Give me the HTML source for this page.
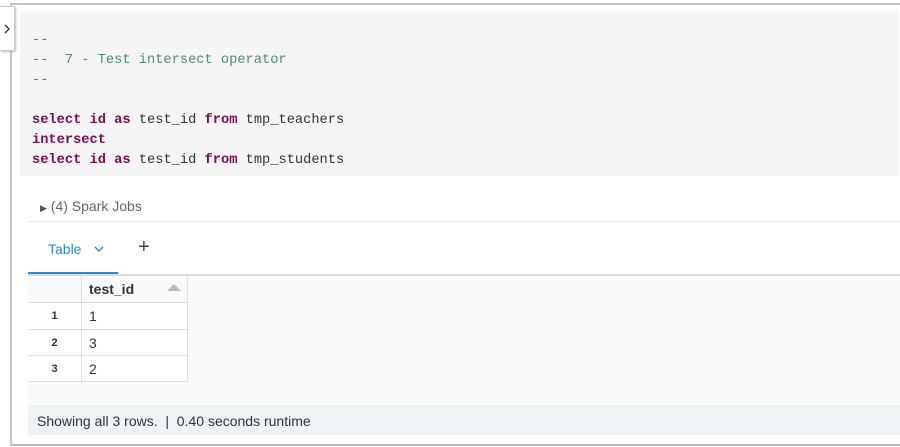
<!DOCTYPE html>
<html><head><style>
body{margin:0;width:900px;height:447px;background:#fff;position:relative;overflow:hidden;font-family:"Liberation Sans",sans-serif}
.outer{position:absolute;left:10px;top:3px;width:892px;height:439px;border-top:2px solid #c4c4c4;border-left:2px solid #c8c8c8;border-bottom:2px solid #bdbdbd}
.tog{position:absolute;left:0;top:6px;width:14px;height:43px;background:#fff;border:1px solid #c8c8c8;border-left:none;box-shadow:1px 1px 2px rgba(0,0,0,.25)}
.code{position:absolute;left:20px;top:11px;width:879px;height:165px;background:#f5f5f5}
pre{margin:0;position:absolute;left:12px;top:20px;font-family:"Liberation Mono",monospace;font-size:13.7px;line-height:20px;color:#333}
.c{color:#4f8a74}.k{color:#7a0d4f;font-weight:bold}
.jobs{position:absolute;left:40px;top:198px;font-size:14px;color:#666}
.box{position:absolute;left:28px;top:221px;width:872px;height:184px;border-top:1px solid #e6e6e6;background:#fff}
.tab{position:absolute;left:20px;top:19px;font-size:14px;color:#2a8ad4}
.und{position:absolute;left:0;top:50px;width:90px;height:2px;background:#2a8ad4}
.grid{position:absolute;left:0;top:52px;width:872px;height:128px;background:#fafafa;border-top:2px solid #dcdcdc}
.cell{position:absolute;box-sizing:border-box;border-right:1px solid #ddd;border-bottom:1px solid #ddd;font-size:14px;color:#333}
.n{font-size:11px;font-weight:bold;text-align:center;padding-top:7px;background:#fff}
.foot{position:absolute;left:28px;top:405px;width:872px;height:30px;background:#eef3f6;font-size:14px;color:#333;line-height:32px;padding-left:9px;box-sizing:border-box}
</style></head><body>
<div class="outer"></div>
<div class="tog"><svg width="14" height="43"><path d="M5 22 L9 26 L5 30" transform="translate(0,-4)" fill="none" stroke="#333" stroke-width="1.3"/></svg></div>
<div class="code"><pre><span class="c">--
--  7 - Test intersect operator
--</span>

<span class="k">select</span> <span class="k">id</span> <span class="k">as</span> test_id <span class="k">from</span> tmp_teachers
<span class="k">intersect</span>
<span class="k">select</span> <span class="k">id</span> <span class="k">as</span> test_id <span class="k">from</span> tmp_students</pre></div>
<div class="jobs"><span style="font-size:9px;color:#555">&#9654;</span> (4) Spark Jobs</div>
<div class="box">
<div class="tab">Table <svg width="12" height="10" style="margin-left:8px"><path d="M2 3 L6 7 L10 3" fill="none" stroke="#2a8ad4" stroke-width="1.4"/></svg></div>
<div style="position:absolute;left:110px;top:14px;font-size:20px;color:#444">+</div>
<div class="und"></div>
<div class="grid">
<div class="cell" style="left:0;top:0;width:54px;height:27px;"></div>
<div class="cell" style="left:54px;top:0;width:106px;height:27px;background:#fafafa;font-weight:bold;padding:5px 0 0 7px">test_id<span style="position:absolute;right:6px;top:8px;width:0;height:0;border-left:7px solid transparent;border-right:7px solid transparent;border-bottom:7px solid #bbb"></span></div>
<div class="cell n" style="left:0;top:27px;width:54px;height:27px;">1</div>
<div class="cell" style="left:54px;top:27px;width:106px;height:27px;background:#fff;padding:5px 0 0 7px">1</div>
<div class="cell n" style="left:0;top:54px;width:54px;height:26px;">2</div>
<div class="cell" style="left:54px;top:54px;width:106px;height:26px;background:#fff;padding:5px 0 0 7px">3</div>
<div class="cell n" style="left:0;top:80px;width:54px;height:26px;">3</div>
<div class="cell" style="left:54px;top:80px;width:106px;height:26px;background:#fff;padding:5px 0 0 7px">2</div>
</div>
</div>
<div class="foot">Showing all 3 rows. &nbsp;| &nbsp;0.40 seconds runtime</div>
</body></html>
